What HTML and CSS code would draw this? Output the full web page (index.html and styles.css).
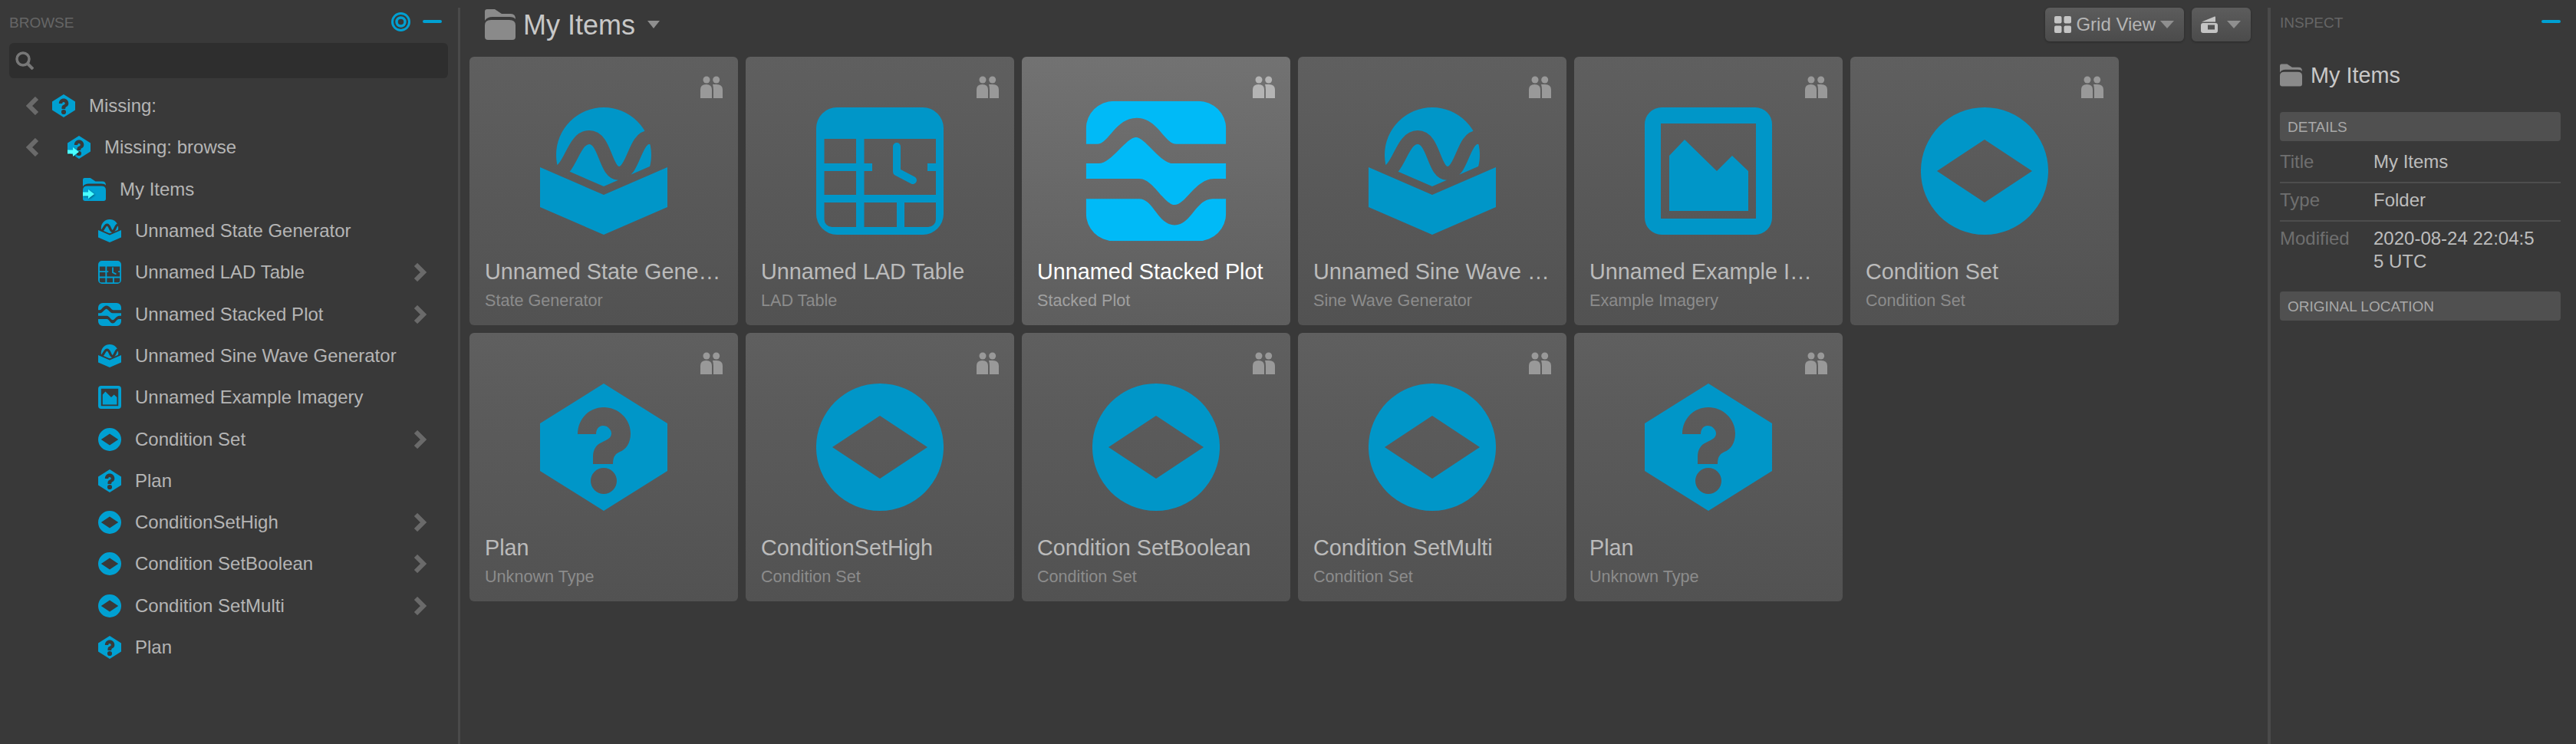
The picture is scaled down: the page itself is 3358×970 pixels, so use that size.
FILE: index.html
```html
<!DOCTYPE html>
<html lang="en">
<head>
    <meta charset="UTF-8">
    <title>My Items</title>
    <link rel="stylesheet" href="styles.css">
</head>
<body>
    <!-- icon set, all drawn on a 166 square -->
    <svg class="icon-defs" xmlns="http://www.w3.org/2000/svg">
        <defs>
            <mask id="waveCut" maskUnits="userSpaceOnUse" x="0" y="0" width="166" height="166">
                <rect width="166" height="166" fill="#fff"/>
                <path d="M5 86H18C40 86 42 39 64 39S84 86 103 86S123 39 142 39H175" fill="none" stroke="#000" stroke-width="18"/>
            </mask>
            <clipPath id="waveClip">
                <polygon points="0,0 166,0 166,67 83,103 0,67"/>
            </clipPath>
            <symbol id="i-wave" viewBox="0 0 166 166">
                <g clip-path="url(#waveClip)"><circle cx="83" cy="62" r="62" mask="url(#waveCut)"/></g>
                <polygon points="0,78 83,114 166,78 166,130 83,166 0,130"/>
            </symbol>
            <symbol id="i-lad" viewBox="0 0 166 166">
                <path fill-rule="evenodd" d="M27 0H139A27 27 0 0 1 166 27V139A27 27 0 0 1 139 166H27A27 27 0 0 1 0 139V27A27 27 0 0 1 27 0ZM10.500 41V73H52V41ZM10.500 83V114H52V83ZM62.500 41V114H156V41ZM10.500 124V146A10 10 0 0 0 20.500 156H52V124ZM62.500 124V156H105V124ZM115 124V156H146A10 10 0 0 0 156 146V124Z"/>
                <path d="M62 73H73V83H62ZM145 73H156V83H145Z"/>
                <path d="M105 51V84L126 95" fill="none" stroke="currentColor" stroke-width="10" stroke-linecap="round" stroke-linejoin="round"/>
            </symbol>
            <symbol id="i-plot" viewBox="0 0 166 166">
                <path d="M0 51V33A33 33 0 0 1 33 0H133A33 33 0 0 1 166 33V51H107C93 51 85 20 60 20C35 20 27 51 13 51Z"/>
                <path d="M0 74H15C30 74 48 43 59 43C70 43 88 74 103 74H166V92H152C130 92 118 123 105 123C92 123 80 92 63 92H0Z"/>
                <path d="M0 116H63C80 116 85 147 105 147C125 147 130 116 150 116H166V133A33 33 0 0 1 133 166H33A33 33 0 0 1 0 133Z"/>
            </symbol>
            <symbol id="i-image" viewBox="0 0 166 166">
                <path fill-rule="evenodd" d="M22 0H144A22 22 0 0 1 166 22V144A22 22 0 0 1 144 166H22A22 22 0 0 1 0 144V22A22 22 0 0 1 22 0ZM21 21V145H145V21Z"/>
                <polygon points="32,135 32,63 52,42 94,83 114,63 135,83 135,135"/>
            </symbol>
            <symbol id="i-cond" viewBox="0 0 166 166">
                <path fill-rule="evenodd" d="M83 0A83 83 0 1 1 83 166A83 83 0 1 1 83 0ZM21 83L83 124L145 83L83 42Z"/>
            </symbol>
            <symbol id="i-unknown" viewBox="0 0 166 166">
                <path fill-rule="evenodd" d="M83 0L166 52V114L83 166L0 114V52ZM49 66H73C73 60 76 55 82 55C88 55 93 60 93 65C93 71 88 73 80 77C73 80 69 86 69 96V105H95C95 95 98 92 104 89C112 86 118 78 118 65C118 46 102 31 83 31C64 31 49 46 49 66ZM83 110A17 17 0 1 0 83 144A17 17 0 1 0 83 110Z"/>
            </symbol>
            <symbol id="i-folder" viewBox="0 0 40 40">
                <path d="M0 15V3Q0 0 3 0H13L22 6H34Q40 6 40 13Q38 10 32 10H10Q3 10 0 15Z"/>
                <path d="M0 21Q0 14 8 14H32Q40 14 40 21V36Q40 40 36 40H4Q0 40 0 36Z"/>
            </symbol>
            <symbol id="i-people" viewBox="0 0 29 29">
                <circle cx="8" cy="5" r="4.500"/>
                <circle cx="20.700" cy="5" r="4.500"/>
                <path d="M0 29V18Q0 11 7.500 11Q15 11 15 18V29Z"/>
                <path d="M16 11H21Q29 11 29 18V29H17V18Q17 14 16 11Z"/>
            </symbol>
            <symbol id="i-chev-left" viewBox="0 0 18 24">
                <polyline points="15,2 5,12 15,22" fill="none" stroke="currentColor" stroke-width="6"/>
            </symbol>
            <symbol id="i-chev-right" viewBox="0 0 18 24">
                <polyline points="3,2 13,12 3,22" fill="none" stroke="currentColor" stroke-width="6"/>
            </symbol>
            <symbol id="i-alias" viewBox="0 0 15 12">
                <polygon points="0,3.500 7,3.500 7,0 15,6 7,12 7,8.500 0,8.500"/>
            </symbol>
        </defs>
    </svg>

    <div class="app">
        <section class="browse-pane">
            <div class="pane-head">
                <span class="pane-label">BROWSE</span>
                <svg class="target-btn" viewBox="0 0 25 25"><circle cx="12.500" cy="12.500" r="11" fill="none" stroke="currentColor" stroke-width="3"/><circle cx="12.500" cy="12.500" r="5.500" fill="none" stroke="currentColor" stroke-width="3.500"/></svg>
                <span class="collapse-btn"></span>
            </div>
            <div class="search-box">
                <svg class="search-icon" viewBox="0 0 24 24"><circle cx="10" cy="10" r="8" fill="none" stroke="currentColor" stroke-width="3.500"/><path d="M15.500 15.500L23 23" fill="none" stroke="currentColor" stroke-width="4"/></svg>
            </div>
            <div class="tree">
                <div class="tree-row">
                    <span class="nav-slot"><svg class="chev"><use href="#i-chev-left"/></svg></span>
                    <span class="tree-icon"><svg><use href="#i-unknown"/></svg></span>
                    <span class="tree-label">Missing:</span>
                </div>
                <div class="tree-row lvl-1">
                    <span class="nav-slot"><svg class="chev"><use href="#i-chev-left"/></svg></span>
                    <span class="tree-icon"><svg><use href="#i-unknown"/></svg><svg class="alias"><use href="#i-alias"/></svg></span>
                    <span class="tree-label">Missing: browse</span>
                </div>
                <div class="tree-row lvl-2">
                    <span class="nav-slot"></span>
                    <span class="tree-icon"><svg><use href="#i-folder"/></svg><svg class="alias"><use href="#i-alias"/></svg></span>
                    <span class="tree-label">My Items</span>
                </div>
                <div class="tree-row lvl-3">
                    <span class="nav-slot"></span>
                    <span class="tree-icon"><svg><use href="#i-wave"/></svg></span>
                    <span class="tree-label">Unnamed State Generator</span>
                </div>
                <div class="tree-row lvl-3">
                    <span class="nav-slot"></span>
                    <span class="tree-icon"><svg><use href="#i-lad"/></svg></span>
                    <span class="tree-label">Unnamed LAD Table</span>
                    <svg class="chev chev-view"><use href="#i-chev-right"/></svg>
                </div>
                <div class="tree-row lvl-3">
                    <span class="nav-slot"></span>
                    <span class="tree-icon"><svg><use href="#i-plot"/></svg></span>
                    <span class="tree-label">Unnamed Stacked Plot</span>
                    <svg class="chev chev-view"><use href="#i-chev-right"/></svg>
                </div>
                <div class="tree-row lvl-3">
                    <span class="nav-slot"></span>
                    <span class="tree-icon"><svg><use href="#i-wave"/></svg></span>
                    <span class="tree-label">Unnamed Sine Wave Generator</span>
                </div>
                <div class="tree-row lvl-3">
                    <span class="nav-slot"></span>
                    <span class="tree-icon"><svg><use href="#i-image"/></svg></span>
                    <span class="tree-label">Unnamed Example Imagery</span>
                </div>
                <div class="tree-row lvl-3">
                    <span class="nav-slot"></span>
                    <span class="tree-icon"><svg><use href="#i-cond"/></svg></span>
                    <span class="tree-label">Condition Set</span>
                    <svg class="chev chev-view"><use href="#i-chev-right"/></svg>
                </div>
                <div class="tree-row lvl-3">
                    <span class="nav-slot"></span>
                    <span class="tree-icon"><svg><use href="#i-unknown"/></svg></span>
                    <span class="tree-label">Plan</span>
                </div>
                <div class="tree-row lvl-3">
                    <span class="nav-slot"></span>
                    <span class="tree-icon"><svg><use href="#i-cond"/></svg></span>
                    <span class="tree-label">ConditionSetHigh</span>
                    <svg class="chev chev-view"><use href="#i-chev-right"/></svg>
                </div>
                <div class="tree-row lvl-3">
                    <span class="nav-slot"></span>
                    <span class="tree-icon"><svg><use href="#i-cond"/></svg></span>
                    <span class="tree-label">Condition SetBoolean</span>
                    <svg class="chev chev-view"><use href="#i-chev-right"/></svg>
                </div>
                <div class="tree-row lvl-3">
                    <span class="nav-slot"></span>
                    <span class="tree-icon"><svg><use href="#i-cond"/></svg></span>
                    <span class="tree-label">Condition SetMulti</span>
                    <svg class="chev chev-view"><use href="#i-chev-right"/></svg>
                </div>
                <div class="tree-row lvl-3">
                    <span class="nav-slot"></span>
                    <span class="tree-icon"><svg><use href="#i-unknown"/></svg></span>
                    <span class="tree-label">Plan</span>
                </div>
            </div>
        </section>

        <div class="splitter"></div>

        <main class="main-pane">
            <header class="main-head">
                <svg class="main-folder"><use href="#i-folder"/></svg>
                <h1 class="main-title">My Items</h1>
                <span class="caret main-caret"></span>
                <div class="head-tools">
                    <div class="tool-btn">
                        <svg class="tool-icon" viewBox="0 0 22 22"><rect width="9.500" height="9.500" rx="2"/><rect x="12.500" width="9.500" height="9.500" rx="2"/><rect y="12.500" width="9.500" height="9.500" rx="2"/><rect x="12.500" y="12.500" width="9.500" height="9.500" rx="2"/></svg>
                        <span class="tool-label">Grid View</span>
                        <span class="caret"></span>
                    </div>
                    <div class="tool-btn">
                        <svg class="tool-icon" viewBox="0 0 22 22"><path d="M1 7.500L18 0.500Q19 0.300 19 1.500V7.500Z"/><path fill-rule="evenodd" d="M3 9H19Q22 9 22 12V19Q22 22 19 22H3Q0 22 0 19V12Q0 9 3 9ZM9 11.500V17.500H18V11.500Z"/></svg>
                        <span class="caret caret-gap"></span>
                    </div>
                </div>
            </header>

            <div class="grid">
                <div class="card">
                    <svg class="card-people"><use href="#i-people"/></svg>
                    <svg class="card-icon"><use href="#i-wave"/></svg>
                    <div class="card-title">Unnamed State Generator</div>
                    <div class="card-type">State Generator</div>
                </div>
                <div class="card">
                    <svg class="card-people"><use href="#i-people"/></svg>
                    <svg class="card-icon"><use href="#i-lad"/></svg>
                    <div class="card-title">Unnamed LAD Table</div>
                    <div class="card-type">LAD Table</div>
                </div>
                <div class="card card-hover">
                    <svg class="card-people"><use href="#i-people"/></svg>
                    <svg class="card-icon"><use href="#i-plot"/></svg>
                    <div class="card-title">Unnamed Stacked Plot</div>
                    <div class="card-type">Stacked Plot</div>
                </div>
                <div class="card">
                    <svg class="card-people"><use href="#i-people"/></svg>
                    <svg class="card-icon"><use href="#i-wave"/></svg>
                    <div class="card-title">Unnamed Sine Wave Generator</div>
                    <div class="card-type">Sine Wave Generator</div>
                </div>
                <div class="card">
                    <svg class="card-people"><use href="#i-people"/></svg>
                    <svg class="card-icon"><use href="#i-image"/></svg>
                    <div class="card-title">Unnamed Example Imagery</div>
                    <div class="card-type">Example Imagery</div>
                </div>
                <div class="card">
                    <svg class="card-people"><use href="#i-people"/></svg>
                    <svg class="card-icon"><use href="#i-cond"/></svg>
                    <div class="card-title">Condition Set</div>
                    <div class="card-type">Condition Set</div>
                </div>
                <div class="card">
                    <svg class="card-people"><use href="#i-people"/></svg>
                    <svg class="card-icon"><use href="#i-unknown"/></svg>
                    <div class="card-title">Plan</div>
                    <div class="card-type">Unknown Type</div>
                </div>
                <div class="card">
                    <svg class="card-people"><use href="#i-people"/></svg>
                    <svg class="card-icon"><use href="#i-cond"/></svg>
                    <div class="card-title">ConditionSetHigh</div>
                    <div class="card-type">Condition Set</div>
                </div>
                <div class="card">
                    <svg class="card-people"><use href="#i-people"/></svg>
                    <svg class="card-icon"><use href="#i-cond"/></svg>
                    <div class="card-title">Condition SetBoolean</div>
                    <div class="card-type">Condition Set</div>
                </div>
                <div class="card">
                    <svg class="card-people"><use href="#i-people"/></svg>
                    <svg class="card-icon"><use href="#i-cond"/></svg>
                    <div class="card-title">Condition SetMulti</div>
                    <div class="card-type">Condition Set</div>
                </div>
                <div class="card">
                    <svg class="card-people"><use href="#i-people"/></svg>
                    <svg class="card-icon"><use href="#i-unknown"/></svg>
                    <div class="card-title">Plan</div>
                    <div class="card-type">Unknown Type</div>
                </div>
            </div>
        </main>

        <div class="splitter splitter-right"></div>

        <aside class="inspect-pane">
            <div class="pane-head">
                <span class="pane-label">INSPECT</span>
                <span class="collapse-btn"></span>
            </div>
            <div class="inspect-title">
                <svg class="inspect-folder"><use href="#i-folder"/></svg>
                <span>My Items</span>
            </div>
            <div class="section-bar">DETAILS</div>
            <div class="prop-row">
                <span class="prop-name">Title</span>
                <span class="prop-value">My Items</span>
            </div>
            <div class="prop-row">
                <span class="prop-name">Type</span>
                <span class="prop-value">Folder</span>
            </div>
            <div class="prop-row prop-last">
                <span class="prop-name">Modified</span>
                <span class="prop-value">2020-08-24 22:04:55 UTC</span>
            </div>
            <div class="section-bar">ORIGINAL LOCATION</div>
        </aside>
    </div>
</body>
</html>
```

FILE: styles.css
```css
body {
    margin: 0;
    background-color: #393939;
    font-family: "Liberation Sans", Arial, sans-serif;
    color: #b5b5b5;
}

.icon-defs {
    display: block;
    width: 0;
    height: 0;
}

.app {
    display: flex;
    height: 970px;
    overflow: hidden;
}

/* panes */

.browse-pane {
    width: 597px;
    flex: none;
}

.main-pane {
    flex: 1;
    min-width: 0;
}

.inspect-pane {
    width: 398px;
    flex: none;
    box-sizing: border-box;
    padding: 0 20px 0 12px;
}

.splitter {
    width: 3px;
    margin-top: 10px;
    flex: none;
    background-color: #4a4a4a;
}

.splitter-right {
    width: 4px;
}

.pane-head {
    display: flex;
    align-items: center;
    height: 56px;
}

.browse-pane .pane-head {
    padding: 0 21px 0 12px;
}

.pane-label {
    padding-top: 3px;
    font-size: 19px;
    color: #666;
    flex: 1;
}

.target-btn {
    width: 25px;
    height: 25px;
    margin-right: 16px;
    color: #00a0d2;
}

.collapse-btn {
    width: 25px;
    height: 4px;
    border-radius: 2px;
    background-color: #00a0d2;
}

.search-box {
    display: flex;
    align-items: center;
    height: 46px;
    margin: 0 13px 0 12px;
    padding-left: 8px;
    border-radius: 6px;
    background-color: #2e2e2e;
}

.search-icon {
    width: 24px;
    height: 24px;
    color: #777;
}

/* tree */

.tree {
    margin-top: 9px;
}

.tree-row {
    display: flex;
    align-items: center;
    height: 54.3px;
    font-size: 24px;
}

.nav-slot {
    display: flex;
    align-items: center;
    width: 35px;
    margin-left: 33px;
}

.chev {
    width: 18px;
    height: 24px;
    color: #6a6a6a;
}

.chev-view {
    margin-left: auto;
    margin-right: 40px;
}

.tree-icon {
    position: relative;
    display: flex;
    width: 30px;
    height: 30px;
    color: #00a0d2;
    fill: currentColor;
}

.tree-icon svg {
    width: 30px;
    height: 30px;
}

.tree-icon .alias {
    position: absolute;
    left: 0;
    top: 15px;
    width: 15px;
    height: 12px;
    fill: #4affff;
    filter: drop-shadow(1px 1px 1px rgba(0, 0, 0, 0.4));
}

.lvl-1 .tree-icon {
    margin-left: 20px;
}

.lvl-2 .tree-icon {
    margin-left: 40px;
}

.lvl-3 .tree-icon {
    margin-left: 60px;
}

.tree-label {
    margin-left: 18px;
    white-space: nowrap;
}

/* main head */

.main-head {
    display: flex;
    align-items: flex-start;
    height: 74px;
    box-sizing: border-box;
    padding: 10px 22px 0 32px;
}

.main-folder {
    width: 40px;
    height: 40px;
    margin-top: 2px;
    fill: #8a8a8a;
}

.main-title {
    margin: 1px 0 0 10px;
    font-size: 36px;
    font-weight: normal;
    line-height: 44px;
    color: #c8c8c8;
}

.caret {
    width: 0;
    height: 0;
    border-left: 9px solid transparent;
    border-right: 9px solid transparent;
    border-top: 10px solid #8f8f8f;
}

.main-caret {
    margin: 17px 0 0 16px;
    border-left-width: 8px;
    border-right-width: 8px;
}

.head-tools {
    display: flex;
    gap: 10px;
    margin-left: auto;
}

.tool-btn {
    display: flex;
    align-items: center;
    height: 44px;
    padding: 0 13px 0 12px;
    border-radius: 6px;
    background-image: linear-gradient(#5c5c5c, #4b4b4b);
    box-shadow: 0 1px 3px rgba(0, 0, 0, 0.3);
}

.tool-icon {
    width: 22px;
    height: 22px;
    fill: #c4c4c4;
}

.tool-label {
    margin: 0 6px;
    font-size: 24px;
    color: #b5b5b5;
}

.caret-gap {
    margin-left: 12px;
}

/* grid */

.grid {
    display: flex;
    flex-wrap: wrap;
    gap: 10px;
    padding-left: 12px;
}

.card {
    position: relative;
    width: 350px;
    height: 350px;
    box-sizing: border-box;
    padding: 66px 20px 0;
    border-radius: 6px;
    background-image: linear-gradient(#5f5f5f, #525252);
}

.card-people {
    position: absolute;
    top: 25px;
    right: 20px;
    width: 29px;
    height: 29px;
    fill: #999;
}

.card-icon {
    display: block;
    width: 166px;
    height: 166px;
    margin: 0 auto;
    fill: #0096c8;
    color: #0096c8;
}

.card-title {
    margin-top: 30px;
    font-size: 28.8px;
    line-height: 36px;
    color: #bbb;
    white-space: nowrap;
    overflow: hidden;
    text-overflow: ellipsis;
}

.card-type {
    margin-top: 6px;
    font-size: 21.6px;
    line-height: 28px;
    color: #8c8c8c;
}

.card-hover {
    background-image: linear-gradient(#727272, #5e5e5e);
}

.card-hover .card-icon {
    transform: scale(1.1);
    fill: #00baf7;
    color: #00baf7;
}

.card-hover .card-title {
    color: #fff;
}

.card-hover .card-people {
    fill: #b4b4b4;
}

.card-hover .card-type {
    color: #a0a0a0;
}

/* inspector */

.inspect-title {
    display: flex;
    align-items: center;
    gap: 11px;
    height: 30px;
    margin-top: 27px;
    font-size: 28.8px;
    color: #c8c8c8;
}

.inspect-folder {
    width: 29px;
    height: 30px;
    fill: #8a8a8a;
}

.section-bar {
    height: 38px;
    margin-top: 33px;
    padding-left: 10px;
    border-radius: 4px;
    background-color: #505050;
    font-size: 19px;
    line-height: 39px;
    color: #a8a8a8;
}

.prop-row {
    display: flex;
    padding: 7px 0 11px;
    border-bottom: 2px solid #4d4d4d;
    font-size: 24px;
    line-height: 30px;
}

.section-bar + .prop-row {
    margin-top: 5px;
}

.prop-name {
    width: 122px;
    flex: none;
    color: #6f6f6f;
}

.prop-value {
    min-width: 0;
    width: 215px;
    word-break: break-all;
    color: #bdbdbd;
}

.prop-last {
    border-bottom: none;
}

.prop-last + .section-bar {
    margin-top: 13px;
}
```
